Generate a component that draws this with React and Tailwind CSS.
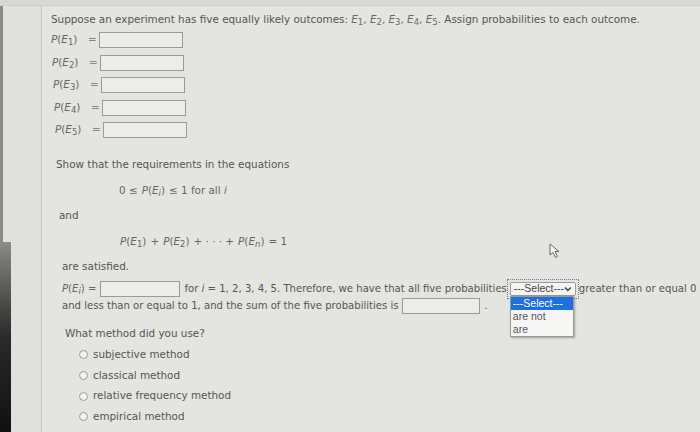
import React from "react";

const Sub = ({ children }) => (
  <sub className="text-[8.5px] relative top-[2px]">{children}</sub>
);

const P = ({ sub }) => (
  <span className="whitespace-nowrap">
    <i>P</i>(<i>E</i>
    <Sub>{sub}</Sub>)
  </span>
);

const Box = ({ w = "w-[84px]" }) => (
  <span className={`inline-block ${w} h-[16px] border border-[#9a9a96] bg-[#ececea] align-middle`} />
);

const Radio = ({ label }) => (
  <div className="h-[20.7px] flex items-center gap-[5px]">
    <span className="w-[9px] h-[9px] rounded-full border border-[#9a9a96] bg-[#f2f2f0]" />
    <span>{label}</span>
  </div>
);

export default function App() {
  return (
    <div
      className="w-[700px] h-[432px] bg-[#e4e4e0] flex flex-col overflow-hidden text-[10.4px] text-[#555553]"
      style={{ fontFamily: '"DejaVu Sans", Verdana, sans-serif' }}
    >
      <div className="h-[6px] bg-[#d8d8d2] border-b border-[#cfcfc8] shrink-0" />
      <div className="flex flex-1 relative">
        <div className="w-[42px] border-r border-[#c0c0b8] border-l-[3px] border-l-[#8c8c86] bg-[#e0e0dc] shrink-0" />
        <div className="absolute left-0 bottom-0 w-[11px] h-[190px] bg-gradient-to-b from-[#8c8c86] via-[#2a2a2a] to-[#111]" />
        <div className="flex-1 pl-[9px] pt-[7px] relative">
          <div className="h-[14px] flex items-center whitespace-nowrap">
            Suppose an experiment has five equally likely outcomes:&nbsp;
            <span className="text-[#6a6a68]">
              <i>E</i><Sub>1</Sub>, <i>E</i><Sub>2</Sub>, <i>E</i><Sub>3</Sub>, <i>E</i><Sub>4</Sub>, <i>E</i><Sub>5</Sub>.
            </span>
            &nbsp;Assign probabilities to each outcome.
          </div>
          <div className="pt-[2px]">
            {[1, 2, 3, 4, 5].map((n) => (
              <div key={n} className="h-[22.5px] flex items-center" style={{ paddingLeft: n - 1 }}>
                <span className="w-[37px] text-[#666664]"><P sub={n} /></span>
                <span className="w-[11px] text-[#888]">=</span>
                <Box />
              </div>
            ))}
          </div>
          <div className="mt-[16px] ml-[5px] h-[14px] flex items-center">Show that the requirements in the equations</div>
          <div className="mt-[12px] ml-[68px] h-[14px] flex items-center gap-[4px] text-[#666664]">
            <span>0 ≤</span>
            <span className="whitespace-nowrap">
              <i>P</i>(<i>E</i><Sub><i>i</i></Sub>)
            </span>
            <span>≤ 1 for all <i>i</i></span>
          </div>
          <div className="mt-[11px] ml-[8px] h-[14px] flex items-center">and</div>
          <div className="mt-[12px] ml-[69px] h-[14px] flex items-center gap-[4px] text-[#666664]">
            <P sub="1" /> <span>+</span> <P sub="2" /> <span>+ · · · +</span>{" "}
            <span className="whitespace-nowrap">
              <i>P</i>(<i>E</i><Sub><i>n</i></Sub>)
            </span>
            <span>= 1</span>
          </div>
          <div className="mt-[11px] ml-[11px] h-[14px] flex items-center">are satisfied.</div>
          <div className="mt-[7px] ml-[11px] h-[16px] flex items-center whitespace-nowrap text-[10.1px]">
            <span className="text-[#666664] mr-[4px]">
              <i>P</i>(<i>E</i><Sub><i>i</i></Sub>) =
            </span>
            <Box w="w-[80px]" />
            <span className="ml-[4px]">for <i>i</i> = 1, 2, 3, 4, 5. Therefore, we have that all five probabilities</span>
            <span className="relative ml-[3px] mr-[3px] outline-1 outline-dotted outline-[#6a7aa0] outline-offset-[2px]">
              <span
                className="w-[66px] h-[14px] flex items-center justify-between px-[3px] bg-[#f4f4f2] border border-[#9a9a96] rounded-[2px] text-[10.5px] text-[#444]"
                style={{ fontFamily: '"Liberation Sans", Arial, sans-serif' }}
              >
                ---Select---
                <svg width="8" height="6" viewBox="0 0 8 6">
                  <path d="M1 1.5 L4 4.5 L7 1.5" stroke="#444" strokeWidth="1.6" fill="none" />
                </svg>
              </span>
              <span
                className="absolute left-0 top-[14px] w-[64px] bg-[#f6f6f4] border border-[#9a9a96] shadow-[1px_1px_2px_rgba(0,0,0,0.3)] flex flex-col text-[10.5px] text-[#555] leading-[13px] z-10"
                style={{ fontFamily: '"Liberation Sans", Arial, sans-serif' }}
              >
                <span className="bg-[#1f6fe0] text-white px-[2px]">---Select---</span>
                <span className="px-[2px]">are not</span>
                <span className="px-[2px]">are</span>
              </span>
            </span>
            <span>greater than or equal 0</span>
          </div>
          <div className="mt-[1px] ml-[11px] h-[17px] flex items-center whitespace-nowrap text-[10.1px]">
            and less than or equal to 1, and the sum of the five probabilities is
            <span className="ml-[3px]"><Box w="w-[78px]" /></span>
            <span className="ml-[5px]">.</span>
          </div>
          <div className="mt-[12px] ml-[14px] h-[14px] flex items-center">What method did you use?</div>
          <div className="mt-[4px] ml-[28px]">
            <Radio label="subjective method" />
            <Radio label="classical method" />
            <Radio label="relative frequency method" />
            <Radio label="empirical method" />
          </div>
          <svg className="absolute left-[507px] top-[237px]" width="12" height="16" viewBox="0 0 12 16">
            <path d="M1 1 L1 12 L4 9.5 L6.5 14.5 L8.5 13.5 L6 8.5 L10 8.5 Z" fill="#f4f4f4" stroke="#666" strokeWidth="1" />
          </svg>
        </div>
      </div>
    </div>
  );
}
